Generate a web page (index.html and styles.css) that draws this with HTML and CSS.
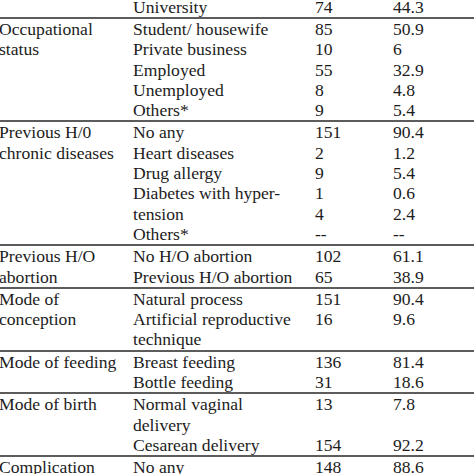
FILE: index.html
```html
<!DOCTYPE html>
<html>
<head>
<meta charset="utf-8">
<link rel="stylesheet" href="styles.css">
</head>
<body>
<div class="table">
  <div class="group first">
    <div class="label r1"></div>
    <div>University</div><div>74</div><div>44.3</div>
  </div>
  <div class="group">
    <div class="label r5">Occupational<br>status</div>
    <div>Student/ housewife</div><div>85</div><div>50.9</div>
    <div>Private business</div><div>10</div><div>6</div>
    <div>Employed</div><div>55</div><div>32.9</div>
    <div>Unemployed</div><div>8</div><div>4.8</div>
    <div>Others*</div><div>9</div><div>5.4</div>
  </div>
  <div class="group">
    <div class="label r6">Previous H/0<br>chronic diseases</div>
    <div>No any</div><div>151</div><div>90.4</div>
    <div>Heart diseases</div><div>2</div><div>1.2</div>
    <div>Drug allergy</div><div>9</div><div>5.4</div>
    <div>Diabetes with hyper-</div><div>1</div><div>0.6</div>
    <div>tension</div><div>4</div><div>2.4</div>
    <div>Others*</div><div>--</div><div>--</div>
  </div>
  <div class="group">
    <div class="label r2">Previous H/O<br>abortion</div>
    <div>No H/O abortion</div><div>102</div><div>61.1</div>
    <div>Previous H/O abortion</div><div>65</div><div>38.9</div>
  </div>
  <div class="group">
    <div class="label r3">Mode of<br>conception</div>
    <div>Natural process</div><div>151</div><div>90.4</div>
    <div>Artificial reproductive</div><div>16</div><div>9.6</div>
    <div>technique</div><div></div><div></div>
  </div>
  <div class="group">
    <div class="label r2">Mode of feeding</div>
    <div>Breast feeding</div><div>136</div><div>81.4</div>
    <div>Bottle feeding</div><div>31</div><div>18.6</div>
  </div>
  <div class="group">
    <div class="label r3">Mode of birth</div>
    <div>Normal vaginal</div><div>13</div><div>7.8</div>
    <div>delivery</div><div></div><div></div>
    <div>Cesarean delivery</div><div>154</div><div>92.2</div>
  </div>
  <div class="group">
    <div class="label r1">Complication</div>
    <div>No any</div><div>148</div><div>88.6</div>
  </div>
</div>
</body>
</html>
```
FILE: styles.css
```css
html, body {
  margin: 0;
  padding: 0;
  background: #ffffff;
  overflow: hidden;
}
.table {
  width: 474px;
  margin-top: -3.3px;
  font-family: "Liberation Serif", "Times New Roman", serif;
  font-size: 17.6px;
  line-height: 20.3px;
  color: #1c1c1c;
}
.group {
  display: grid;
  grid-template-columns: 133px 182px 78px 1fr;
  grid-auto-rows: 20.3px;
  border-top: 2px solid #5c5c5c;
}
.group.first {
  border-top: none;
}
.group > div {
  white-space: nowrap;
}
.label {
  grid-column: 1;
  margin-left: -1px;
}
.r1 { grid-row: 1 / span 1; }
.r2 { grid-row: 1 / span 2; }
.r3 { grid-row: 1 / span 3; }
.r5 { grid-row: 1 / span 5; }
.r6 { grid-row: 1 / span 6; }
```
